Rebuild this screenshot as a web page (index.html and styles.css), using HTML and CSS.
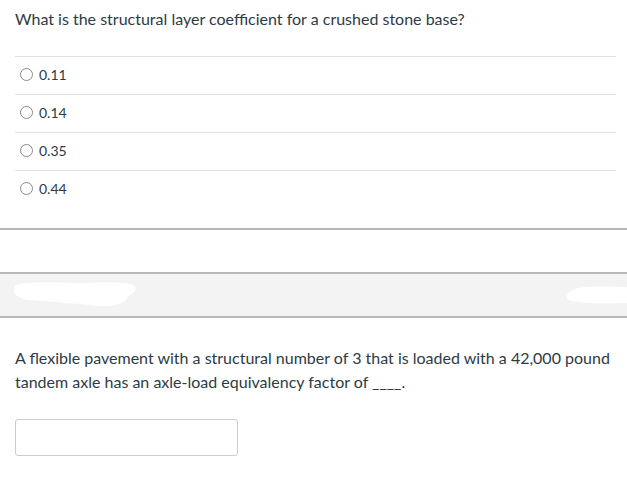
FILE: index.html
```html
<!DOCTYPE html>
<html lang="en">
<head>
<meta charset="utf-8">
<title>Quiz</title>
<link rel="stylesheet" href="styles.css">
</head>
<body>
<div class="question q1">
  <div class="q-text">What is the structural layer coefficient for a crushed stone base?</div>
  <div class="answers">
    <label class="answer"><span class="radio"></span><span class="answer-text">0.11</span></label>
    <label class="answer"><span class="radio"></span><span class="answer-text">0.14</span></label>
    <label class="answer"><span class="radio"></span><span class="answer-text">0.35</span></label>
    <label class="answer"><span class="radio"></span><span class="answer-text">0.44</span></label>
  </div>
</div>
<div class="divider"></div>
<div class="band">
  <svg class="blob blob-left" width="128" height="28" viewBox="0 0 128 28"><path d="M4 6 C10 1 40 2 70 3 C95 2 118 1 125 6 C128 10 122 14 118 16 C116 22 108 27 90 26 C70 24 45 22 20 20 C8 19 2 14 4 6 Z" fill="#ffffff"/></svg>
  <svg class="blob blob-right" width="62" height="20" viewBox="0 0 62 20"><path d="M6 6 C12 1 30 1 62 2 L62 18 C40 18 20 19 6 16 C0 14 1 9 6 6 Z" fill="#ffffff"/></svg>
</div>
<div class="question q2">
  <div class="q-text">A flexible pavement with a structural number of 3 that is loaded with a 42,000 pound tandem axle has an axle-load equivalency factor of ____.</div>
  <input class="text-input" type="text" aria-label="Answer">
</div>
</body>
</html>
```

FILE: styles.css
```css
html, body {
  margin: 0;
  padding: 0;
  background: #ffffff;
}

body {
  font-family: Lato, "Open Sans", sans-serif;
  color: #2d3b45;
}

.question {
  padding: 0 15px;
}

.q-text {
  font-size: 16px;
  line-height: 24px;
}

.q1 {
  padding-top: 7px;
  padding-bottom: 20px;
  padding-right: 11px;
}

.answers {
  margin-top: 25px;
  display: flex;
  flex-direction: column;
}

.answer {
  display: flex;
  align-items: center;
  height: 37px;
  box-sizing: border-box;
  height: 38px;
  padding-bottom: 3px;
  border-top: 1px solid #e0e0e0;
  padding-left: 5px;
  font-size: 14px;
}

.radio {
  width: 13px;
  height: 13px;
  box-sizing: border-box;
  border: 1.5px solid #8a8a8a;
  border-radius: 50%;
  margin-right: 6px;
  flex-shrink: 0;
}

.answer-text {
  color: #2d3b45;
}

.divider {
  height: 0;
  border-top: 2px solid #b8b8b8;
}

.band {
  position: relative;
  margin-top: 42px;
  height: 42px;
  background: #f3f3f3;
  border-top: 2px solid #b8b8b8;
  border-bottom: 2px solid #b8b8b8;
}

.blob {
  position: absolute;
}

.blob-left {
  left: 10px;
  top: 6px;
}

.blob-right {
  right: 0;
  top: 11px;
}

.q2 {
  padding-top: 28px;
}

.text-input {
  display: block;
  margin-top: 25px;
  width: 223px;
  height: 37px;
  box-sizing: border-box;
  border: 1px solid #c7cdd1;
  border-radius: 3px;
  background: #fff;
  padding: 0 8px;
  font-family: inherit;
  font-size: 14px;
}
```
